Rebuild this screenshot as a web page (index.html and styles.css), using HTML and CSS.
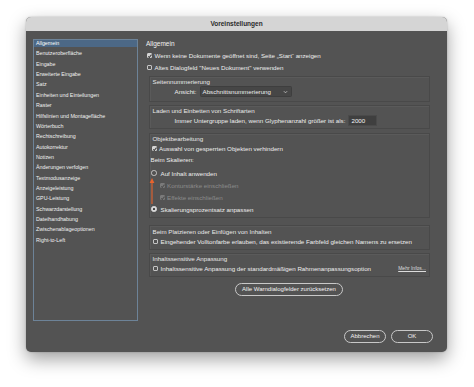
FILE: index.html
```html
<!DOCTYPE html>
<html lang="de">
<head>
<meta charset="utf-8">
<title>Voreinstellungen</title>
<link rel="stylesheet" href="styles.css">
</head>
<body>
<div class="window">
  <div class="titlebar">Voreinstellungen</div>
  <div class="main">
    <ul class="nav">
      <li class="selected">Allgemein</li>
      <li>Benutzeroberfläche</li>
      <li>Eingabe</li>
      <li>Erweiterte Eingabe</li>
      <li>Satz</li>
      <li>Einheiten und Einteilungen</li>
      <li>Raster</li>
      <li>Hilfslinien und Montagefläche</li>
      <li>Wörterbuch</li>
      <li>Rechtschreibung</li>
      <li>Autokorrektur</li>
      <li>Notizen</li>
      <li>Änderungen verfolgen</li>
      <li>Textmodusanzeige</li>
      <li>Anzeigeleistung</li>
      <li>GPU-Leistung</li>
      <li>Schwarzdarstellung</li>
      <li>Dateihandhabung</li>
      <li>Zwischenablageoptionen</li>
      <li>Right-to-Left</li>
    </ul>
    <div class="content">
      <div class="heading">Allgemein</div>
      <div class="row r-cb1"><span class="cb checked"></span><span>Wenn keine Dokumente geöffnet sind, Seite „Start“ anzeigen</span></div>
      <div class="row r-cb2"><span class="cb"></span><span>Altes Dialogfeld "Neues Dokument" verwenden</span></div>

      <div class="group g1">
        <div class="glabel">Seitennummerierung</div>
        <div class="row indent">
          <span>Ansicht:</span>
          <span class="select">Abschnittsnummerierung<svg class="chev" viewBox="0 0 6 4" width="5" height="4"><path d="M1 1 L3 3 L5 1" fill="none" stroke="#cfcfcf" stroke-width="0.9"/></svg></span>
        </div>
      </div>

      <div class="group g2">
        <div class="glabel">Laden und Einbetten von Schriftarten</div>
        <div class="row indent">
          <span>Immer Untergruppe laden, wenn Glyphenanzahl größer ist als:</span>
          <span class="input">2000</span>
        </div>
      </div>

      <div class="group g3">
        <div class="glabel">Objektbearbeitung</div>
        <div class="row r-obj"><span class="cb checked"></span><span>Auswahl von gesperrten Objekten verhindern</span></div>
        <div class="row r-beim">Beim Skalieren:</div>
        <div class="row r-radio1"><span class="radio"></span><span>Auf Inhalt anwenden</span></div>
        <div class="row r-sub disabled"><span class="cb checked"></span><span>Konturstärke einschließen</span></div>
        <div class="row r-sub disabled"><span class="cb checked"></span><span>Effekte einschließen</span></div>
        <div class="row r-radio2"><span class="radio on"></span><span>Skalierungsprozentsatz anpassen</span></div>
        <svg class="arrow" width="8" height="28" viewBox="0 0 8 28">
          <path d="M4 27 L4 4" stroke="#e8642e" stroke-width="1.1" fill="none"/>
          <path d="M1.6 6 L4 1 L6.4 6 Z" fill="#e8642e"/>
        </svg>
      </div>

      <div class="group g4">
        <div class="glabel">Beim Platzieren oder Einfügen von Inhalten</div>
        <div class="row r-gcb"><span class="cb"></span><span>Eingehender Volltonfarbe erlauben, das existierende Farbfeld gleichen Namens zu ersetzen</span></div>
      </div>

      <div class="group g5">
        <div class="glabel">Inhaltssensitive Anpassung</div>
        <div class="row r-gcb"><span class="cb"></span><span>Inhaltssensitive Anpassung der standardmäßigen Rahmenanpassungsoption</span><a class="more">Mehr Infos...</a></div>
      </div>

      <div class="reset-wrap"><button class="pill reset">Alle Warndialogfelder zurücksetzen</button></div>
    </div>
  </div>
  <div class="footer">
    <button class="pill foot">Abbrechen</button>
    <button class="pill foot">OK</button>
  </div>
</div>
</body>
</html>
```

FILE: styles.css
```css
* { box-sizing: border-box; }
html, body { margin: 0; padding: 0; background: #ffffff; }
body {
  font-family: "Liberation Sans", Arial, sans-serif;
  width: 474px;
  height: 387px;
  overflow: hidden;
}
.window {
  width: 421px;
  height: 335px;
  margin: 17px 0 0 26px;
  border-radius: 5px;
  background: #535353;
  box-shadow: 0 7px 18px rgba(0,0,0,0.38), 0 0 2px rgba(0,0,0,0.25);
  display: flex;
  flex-direction: column;
  overflow: hidden;
}
.titlebar {
  height: 14px;
  flex: none;
  background: #d5d5d5;
  color: #2a2a2a;
  font-weight: bold;
  font-size: 6.5px;
  line-height: 14px;
  text-align: center;
}
.main {
  flex: none;
  height: 291px;
  display: flex;
  gap: 8px;
  padding: 8px 15px 0 7px;
}
.nav {
  list-style: none;
  margin: 0;
  padding: 0;
  width: 105px;
  height: 282px;
  border: 1px solid #6d8398;
  flex: none;
}
.nav li {
  height: 7.4px;
  line-height: 7.4px;
  margin-bottom: 2.97px;
  padding-left: 2px;
  font-size: 5.3px;
  color: #f2f2f2;
  white-space: nowrap;
}
.nav li.selected {
  background: #4c6886;
  color: #ffffff;
}
.content {
  flex: 1;
  display: flex;
  flex-direction: column;
  color: #eeeeee;
  font-size: 6.2px;
}
.heading {
  height: 10px;
  line-height: 10px;
  font-size: 6.5px;
  color: #f2f2f2;
}
.row {
  display: flex;
  align-items: center;
  gap: 2.5px;
  white-space: nowrap;
}
.r-cb1 { height: 12px; padding-left: 1px; }
.r-cb2 { height: 13px; padding-left: 1px; }

.cb {
  width: 5px;
  height: 5px;
  border: 0.8px solid #c4c4c4;
  border-radius: 1px;
  flex: none;
  position: relative;
}
.cb.checked {
  background: #d4d4d4;
  border-color: #d4d4d4;
}
.cb.checked::after {
  content: "";
  position: absolute;
  left: 1.3px;
  top: 0.1px;
  width: 1.3px;
  height: 2.6px;
  border-right: 0.9px solid #3c3c3c;
  border-bottom: 0.9px solid #3c3c3c;
  transform: rotate(40deg);
}
.disabled { color: #8c8c8c; }
.disabled .cb.checked { background: #7a7a7a; border-color: #7a7a7a; }
.disabled .cb.checked::after { border-color: #4e4e4e; }

.radio {
  width: 5.5px;
  height: 5.5px;
  border: 0.8px solid #c4c4c4;
  border-radius: 50%;
  flex: none;
  position: relative;
}
.radio.on {
  background: #d8d8d8;
  border-color: #d8d8d8;
}
.radio.on::after {
  content: "";
  position: absolute;
  left: 1.1px;
  top: 1.1px;
  width: 1.7px;
  height: 1.7px;
  border-radius: 50%;
  background: #333;
}

.group {
  margin: 0 2px 0 3px;
  border: 1px solid #494949;
  box-shadow: inset 1px 1px 0 #5a5a5a;
  padding-left: 2.5px;
  position: relative;
  flex: none;
}
.glabel {
  height: 9px;
  line-height: 9px;
  color: #e8e8e8;
}
.indent { padding-left: 22px; gap: 3px; }
.g1 { margin-top: 2px; height: 26px; }
.g1 .indent { height: 11px; }
.g2 { margin-top: 3px; height: 24px; }
.g2 .indent { height: 11px; }
.g3 { margin-top: 4px; height: 85px; padding-left: 0; }
.g3 .glabel { padding-left: 2.5px; }
.r-obj { height: 11px; padding-left: 1.5px; }
.r-beim { height: 11px; padding-left: 0.5px; }
.r-radio1 { height: 12px; margin-top: 2px; padding-left: 1px; gap: 4px; }
.r-sub { height: 12px; padding-left: 10px; gap: 2px; }
.r-radio2 { height: 12px; padding-left: 1px; gap: 4px; }
.g4 { margin-top: 7px; height: 25px; padding-top: 1px; }
.g5 { margin-top: 3px; height: 24px; }
.r-gcb { height: 10px; padding-left: 0.5px; gap: 2.5px; padding-right: 3px; }

.select {
  display: inline-flex;
  align-items: center;
  justify-content: space-between;
  width: 92px;
  height: 11px;
  padding: 0 3px 0 2px;
  background: #464646;
  border: 1px solid #3e3e3e;
  border-radius: 1.5px;
  color: #ededed;
}
.input {
  display: inline-flex;
  align-items: center;
  width: 29px;
  height: 11px;
  padding-left: 2px;
  background: #3f3f3f;
  border: 1px solid #4a4a4a;
  color: #f4f4f4;
}
.more {
  margin-left: auto;
  font-size: 5px;
  color: #dcdcdc;
  text-decoration: underline;
}
.arrow {
  position: absolute;
  left: -2px;
  top: 43px;
}
.reset-wrap {
  display: flex;
  justify-content: center;
  margin-top: 6px;
}
.pill {
  font-family: "Liberation Sans", Arial, sans-serif;
  font-size: 6px;
  color: #f2f2f2;
  background: transparent;
  border: 1px solid #c8c8c8;
  border-radius: 7px;
  height: 13px;
  padding: 0;
  line-height: 11px;
}
.reset { width: 108px; }
.footer {
  flex: 1;
  display: flex;
  justify-content: flex-end;
  gap: 5px;
  padding: 8px 14px 0 0;
}
.foot { width: 42px; }
```
